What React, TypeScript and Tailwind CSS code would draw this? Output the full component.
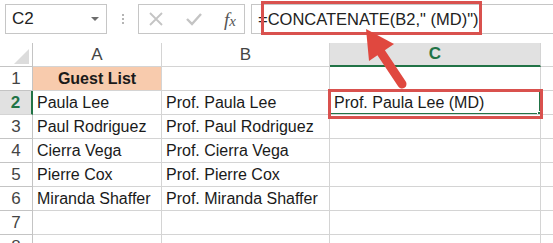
import React from 'react';

const rows = [
  { n: 1, a: 'Guest List', b: '', c: '' },
  { n: 2, a: 'Paula Lee', b: 'Prof. Paula Lee', c: 'Prof. Paula Lee (MD)' },
  { n: 3, a: 'Paul Rodriguez', b: 'Prof. Paul Rodriguez', c: '' },
  { n: 4, a: 'Cierra Vega', b: 'Prof. Cierra Vega', c: '' },
  { n: 5, a: 'Pierre Cox', b: 'Prof. Pierre Cox', c: '' },
  { n: 6, a: 'Miranda Shaffer', b: 'Prof. Miranda Shaffer', c: '' },
  { n: 7, a: '', b: '', c: '' },
  { n: 8, a: '', b: '', c: '' },
];

const cell = 'h-[24px] border-r border-b border-[#d4d4d4] px-[4px] flex items-center whitespace-nowrap overflow-hidden';

export default function App() {
  return (
    <div className="relative w-[553px] h-[243px] overflow-hidden bg-white text-[#1a1a1a] font-['Liberation_Sans',Arial,sans-serif]">
      {/* formula bar */}
      <div className="flex items-start h-[43px] pt-[4px] pl-[5px]">
        <div className="w-[102px] h-[30px] border border-[#c6c6c6] flex items-center justify-between pl-[6px] pr-[7px]">
          <span className="text-[17px] text-[#222]">C2</span>
          <span className="w-0 h-0 border-l-[4px] border-r-[4px] border-t-[4px] border-l-transparent border-r-transparent border-t-[#6d6d6d]" />
        </div>
        <div className="w-[31px] h-[30px] flex flex-col items-center justify-center gap-[2px]">
          <span className="w-[2px] h-[2px] bg-[#b5b5b5]" />
          <span className="w-[2px] h-[2px] bg-[#b5b5b5]" />
          <span className="w-[2px] h-[2px] bg-[#b5b5b5]" />
        </div>
        <div className="w-[107px] h-[30px] border border-[#c6c6c6] flex items-center pl-[9px] pr-[8px] justify-between">
          <svg width="16" height="16" viewBox="0 0 16 16">
            <path d="M2 2 L14 14 M14 2 L2 14" stroke="#c4c4c4" strokeWidth="1.8" />
          </svg>
          <svg width="18" height="16" viewBox="0 0 18 16">
            <path d="M2 8 L7 13 L16 3" stroke="#c4c4c4" strokeWidth="2.4" fill="none" />
          </svg>
          <span className="text-[19px] italic text-[#555] font-['Liberation_Serif',serif] leading-none">
            f<span className="text-[15px]">x</span>
          </span>
        </div>
        <div className="flex-1 ml-[6px] h-[30px] border-t border-b border-l border-[#c6c6c6] flex items-center pl-[6px]">
          <span className="text-[16.5px] text-[#222] whitespace-nowrap">=CONCATENATE(B2," (MD)")</span>
        </div>
      </div>

      {/* sheet */}
      <div className="grid grid-cols-[33px_129px_168px_211px_1fr] text-[16px]">
        <div className="h-[24px] border-r border-b border-[#c4c4c4] flex items-end justify-end pr-[3px] pb-[2px]">
          <span className="w-0 h-0 border-l-[15px] border-b-[15px] border-l-transparent border-b-[#dcdcdc]" />
        </div>
        <div className="h-[24px] border-r border-b border-[#d4d4d4] flex items-center justify-center text-[17px] text-[#444]">A</div>
        <div className="h-[24px] border-r border-b border-[#d4d4d4] flex items-center justify-center text-[17px] text-[#444]">B</div>
        <div className="h-[24px] border-r border-[#d4d4d4] border-b-2 border-b-[#217346] bg-[#e1e1e1] flex items-center justify-center text-[17px] font-bold text-[#217346]">C</div>
        <div className="h-[24px] border-b border-[#d4d4d4]" />

        {rows.map((r) => (
          <React.Fragment key={r.n}>
            <div
              className={
                r.n === 2
                  ? 'h-[24px] border-b border-[#d4d4d4] border-r-2 border-r-[#217346] bg-[#e1e1e1] flex items-center justify-center text-[17px] font-bold text-[#217346]'
                  : 'h-[24px] border-r border-b border-[#c4c4c4] flex items-center justify-center text-[17px] text-[#444]'
              }
            >
              {r.n}
            </div>
            <div className={r.n === 1 ? cell + ' bg-[#f8cbad] justify-center font-bold' : cell}>{r.a}</div>
            <div className={cell}>{r.b}</div>
            <div className={r.n === 2 ? cell + ' relative' : cell}>
              {r.c}
              {r.n === 2 && (
                <span className="absolute inset-[-1px] border-2 border-[#217346]">
                  <span className="absolute right-[-3px] bottom-[-3px] w-[5px] h-[5px] bg-[#217346] border border-white" />
                </span>
              )}
            </div>
            <div className="h-[24px] border-b border-[#d4d4d4]" />
          </React.Fragment>
        ))}
      </div>

      {/* callouts */}
      <div className="absolute left-[261px] top-[1px] w-[221px] h-[34px] border-[3px] border-[#d9514e]" />
      <div className="absolute left-[328px] top-[89px] w-[215px] h-[30px] border-[3px] border-[#d9514e]" />
      <svg className="absolute left-0 top-0" width="553" height="243" viewBox="0 0 553 243">
        <line x1="402" y1="84" x2="380" y2="51" stroke="#e0483f" strokeWidth="9" strokeLinecap="round" />
        <polygon points="366,29 394,44 369,61" fill="#e0483f" />
      </svg>
    </div>
  );
}
